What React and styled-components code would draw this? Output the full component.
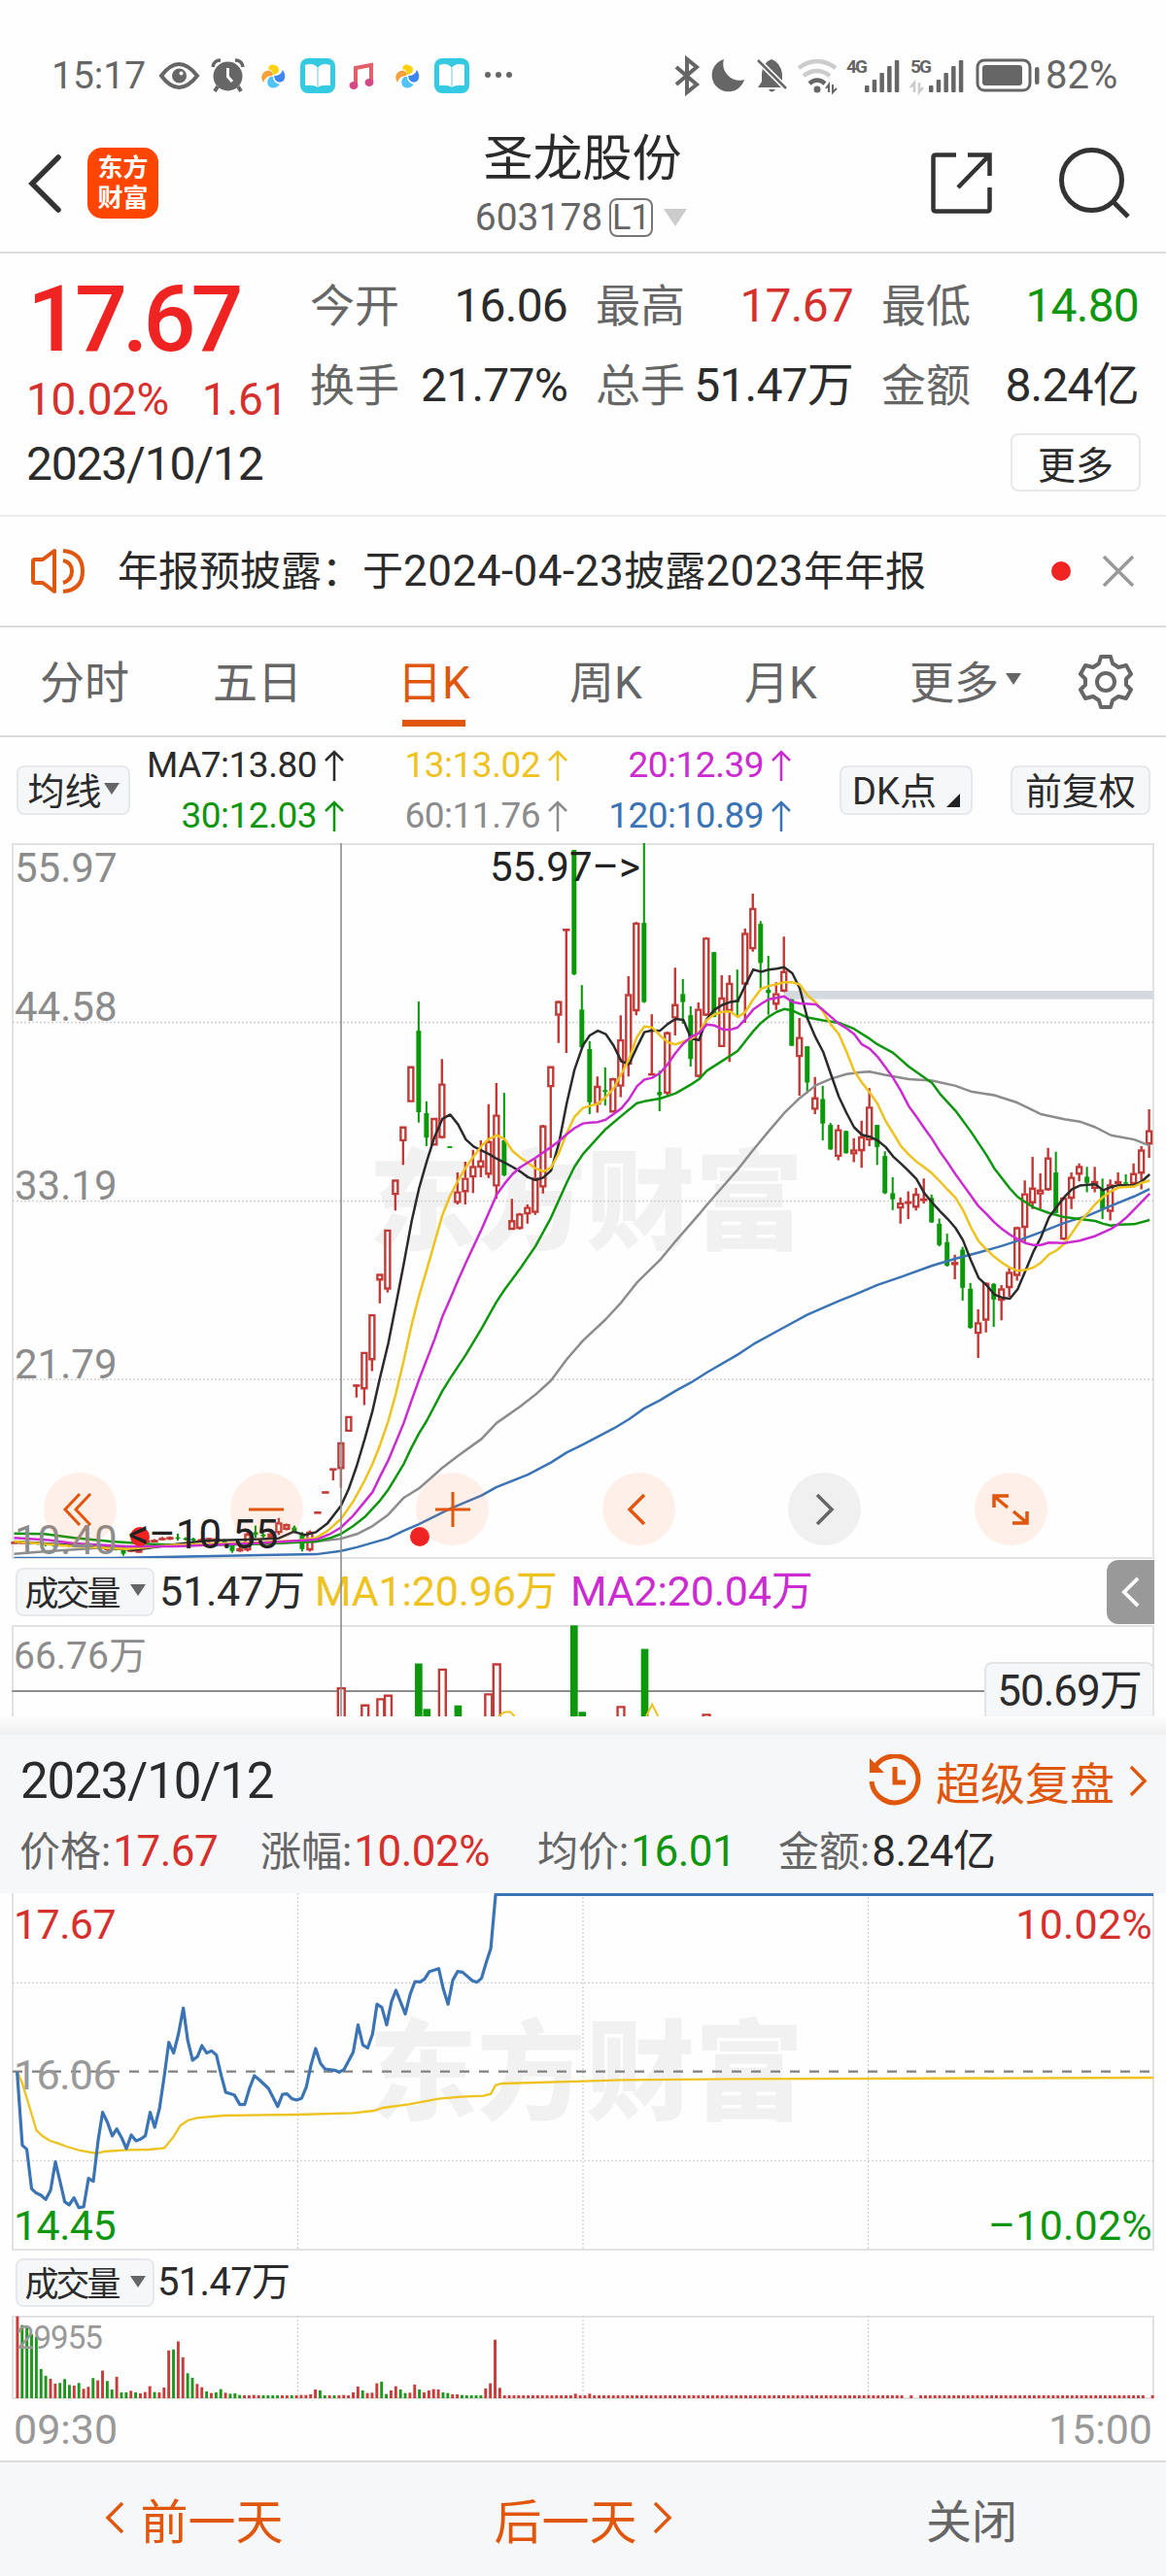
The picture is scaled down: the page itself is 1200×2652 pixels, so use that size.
import { useState } from "react";
import styled, { createGlobalStyle } from "styled-components";

const RED = "#d6302d";
const GREEN = "#0f960f";
const ORANGE = "#e0560b";
const YELLOW = "#eec21f";
const PURPLE = "#cb2bd0";
const BLUE = "#3a74b4";
const GREY = "#8c8c8c";
const DARK = "#2b2b2b";

// the daily chart is plotted on a 3136 x 1519 canvas, one candle every 20.9 units
const STEP = 20.9;
const CURSOR = 917;

// [high, body top, body bottom, low, up?]
const candles = [
  [1501, 1501, 1503, 1503, 1], [1500, 1501, 1503, 1504, 1], [1500, 1503, 1505, 1506, 0], [1501, 1502, 1505, 1507, 0],
  [1503, 1505, 1508, 1510, 0], [1504, 1505, 1509, 1511, 0], [1503, 1506, 1509, 1510, 1], [1504, 1506, 1510, 1512, 0],
  [1506, 1507, 1510, 1511, 1], [1505, 1508, 1511, 1512, 1], [1506, 1510, 1513, 1514, 0], [1507, 1510, 1513, 1515, 0],
  [1506, 1514, 1517, 1522, 1], [1508, 1513, 1517, 1519, 0], [1513, 1517, 1526, 1530, 0], [1510, 1515, 1521, 1522, 1],
  [1512, 1519, 1523, 1524, 1], [1496, 1498, 1502, 1503, 1], [1495, 1497, 1501, 1502, 1], [1490, 1493, 1496, 1497, 1],
  [1489, 1491, 1495, 1497, 1], [1483, 1491, 1494, 1498, 0], [1491, 1493, 1496, 1498, 0], [1492, 1494, 1498, 1502, 0],
  [1493, 1496, 1500, 1502, 1], [1492, 1493, 1500, 1502, 1], [1492, 1494, 1500, 1501, 1], [1495, 1497, 1503, 1508, 0],
  [1504, 1508, 1520, 1524, 0], [1506, 1515, 1520, 1522, 1], [1480, 1484, 1518, 1521, 1], [1466, 1480, 1486, 1492, 0],
  [1482, 1485, 1489, 1492, 0], [1480, 1484, 1492, 1496, 1], [1450, 1460, 1481, 1486, 1], [1462, 1464, 1474, 1476, 1],
  [1466, 1470, 1480, 1482, 0], [1480, 1485, 1516, 1521, 0], [1476, 1480, 1518, 1521, 1], [1438, 1437, 1439, 1438, 1],
  [1395, 1394, 1396, 1395, 1], [1346, 1345, 1347, 1370, 1], [1290, 1290, 1345, 1386, 1], [1234, 1234, 1266, 1266, 1],
  [1168, 1167, 1169, 1194, 1], [1098, 1098, 1176, 1210, 1], [1018, 1018, 1114, 1138, 1], [932, 932, 945, 994, 1],
  [838, 838, 964, 971, 1], [732, 732, 763, 797, 1], [619, 619, 649, 700, 1], [491, 491, 566, 566, 1],
  [353, 415, 588, 610, 0], [565, 590, 642, 660, 0], [601, 601, 658, 658, 1], [475, 528, 642, 644, 1],
  [661, 660, 664, 663, 0], [716, 757, 780, 784, 1], [693, 728, 757, 784, 1], [668, 703, 726, 760, 1],
  [648, 691, 705, 726, 1], [571, 650, 720, 728, 1], [526, 594, 745, 772, 1], [547, 648, 722, 724, 0],
  [772, 818, 837, 837, 1], [802, 804, 835, 837, 1], [784, 790, 804, 825, 1], [688, 728, 801, 806, 1],
  [615, 617, 747, 761, 1], [491, 491, 534, 685, 1], [351, 353, 382, 441, 1], [200, 199, 201, 462, 1],
  [31, 31, 295, 297, 0], [318, 370, 450, 452, 0], [437, 454, 567, 592, 0], [512, 533, 571, 589, 1],
  [493, 541, 545, 574, 0], [515, 517, 588, 588, 1], [382, 434, 533, 556, 1], [299, 338, 486, 512, 1],
  [184, 186, 373, 382, 1], [16, 186, 354, 356, 0], [380, 506, 509, 509, 1], [500, 545, 552, 586, 0],
  [417, 419, 548, 552, 1], [281, 359, 388, 425, 1], [305, 337, 354, 400, 0], [363, 382, 475, 491, 0],
  [355, 369, 512, 514, 1], [216, 218, 382, 384, 1], [248, 248, 386, 386, 0], [297, 345, 449, 449, 1],
  [297, 314, 373, 481, 1], [285, 350, 354, 383, 0], [198, 208, 316, 398, 1], [124, 155, 241, 247, 1],
  [182, 188, 271, 325, 0], [256, 328, 335, 381, 0], [312, 336, 359, 371, 1], [215, 289, 331, 333, 1],
  [348, 348, 447, 447, 0], [388, 429, 470, 553, 1], [448, 448, 525, 548, 0], [513, 557, 582, 592, 1],
  [532, 560, 612, 648, 0], [611, 615, 667, 668, 0], [615, 625, 682, 690, 1], [627, 628, 675, 676, 0],
  [643, 668, 677, 694, 1], [606, 640, 670, 706, 1], [537, 577, 647, 660, 1], [615, 615, 662, 700, 0],
  [671, 681, 760, 762, 0], [726, 760, 773, 796, 0], [769, 781, 792, 825, 1], [756, 778, 782, 815, 1],
  [749, 762, 790, 797, 1], [729, 772, 776, 782, 1], [763, 770, 822, 823, 0], [814, 825, 870, 873, 0],
  [846, 864, 914, 916, 0], [891, 907, 912, 943, 1], [874, 880, 961, 988, 0], [951, 963, 1046, 1048, 0],
  [1007, 1035, 1058, 1110, 1], [950, 951, 1030, 1056, 1], [951, 953, 986, 1044, 0], [955, 963, 988, 1030, 1],
  [918, 928, 961, 980, 1], [831, 833, 935, 946, 1], [733, 761, 833, 865, 1], [683, 749, 781, 794, 1],
  [718, 753, 762, 794, 1], [664, 685, 753, 755, 1], [672, 716, 802, 803, 0], [768, 770, 858, 860, 1],
  [716, 726, 771, 794, 1], [697, 703, 720, 735, 1], [704, 725, 738, 758, 0], [704, 735, 750, 758, 1],
  [729, 752, 794, 815, 0], [731, 742, 799, 818, 1], [716, 735, 740, 742, 1], [720, 737, 740, 742, 0],
  [697, 718, 740, 745, 1], [660, 668, 718, 752, 1], [582, 627, 656, 685, 1],
];

const averages = [
  { color: BLUE, points: "38,1535 300,1535 500,1532 700,1529 850,1527 917,1520 960,1512 1044,1493 1086,1477 1127,1463 1211,1430 1295,1402 1336,1384 1420,1358 1482,1332 1524,1311 1568,1294 1650,1260 1692,1240 1733,1217 1775,1200 1817,1180 1859,1162 1901,1141 1984,1103 2026,1081 2109,1045 2172,1018 2256,989 2297,976 2360,955 2423,938 2507,914 2570,899 2632,886 2695,872 2737,861 2799,843 2863,823 2925,808 2988,787 3050,767 3092,751" },
  { color: GREY, points: "38,1526 120,1521 300,1512 500,1508 700,1504 850,1500 917,1494 960,1484 1002,1467 1044,1443 1086,1407 1127,1387 1169,1358 1190,1343 1232,1318 1295,1282 1336,1248 1399,1213 1440,1188 1482,1158 1524,1113 1568,1073 1629,1028 1671,992 1713,950 1775,902 1817,862 1880,805 1901,785 1984,710 2026,668 2068,628 2109,590 2151,558 2194,531 2235,517 2277,507 2318,503 2339,502 2382,509 2444,518 2507,521 2570,532 2611,544 2674,552 2737,568 2799,592 2863,603 2904,608 2946,620 2988,637 3050,646 3092,659" },
  { color: GREEN, points: "38,1483 120,1484 200,1492 300,1500 400,1505 500,1508 700,1505 850,1500 890,1492 917,1484 950,1467 981,1448 1002,1430 1022,1413 1044,1390 1064,1364 1086,1335 1107,1300 1127,1270 1148,1243 1190,1180 1211,1153 1253,1103 1295,1048 1336,990 1357,965 1399,920 1440,873 1482,812 1524,738 1545,704 1568,677 1608,642 1629,624 1671,596 1713,569 1733,565 1775,559 1817,548 1859,529 1880,518 1901,500 1943,479 1984,458 2005,437 2026,416 2047,398 2068,385 2089,375 2109,369 2131,372 2172,387 2214,393 2256,398 2297,411 2339,432 2360,444 2402,462 2444,491 2507,526 2528,549 2570,585 2611,629 2654,680 2674,707 2716,750 2737,768 2779,790 2821,802 2863,811 2904,815 2946,819 2967,825 2988,829 3009,827 3050,826 3092,817" },
  { color: DARK, points: "38,1500 200,1508 360,1518 470,1506 560,1498 700,1495 750,1493 790,1479 820,1486 850,1480 880,1462 917,1424 938,1388 960,1338 981,1282 1002,1222 1022,1152 1044,1080 1064,1000 1086,910 1107,820 1127,750 1148,692 1169,640 1190,602 1211,593 1232,614 1253,646 1274,661 1295,669 1315,677 1336,687 1357,695 1378,704 1399,714 1420,726 1440,732 1461,727 1482,712 1503,655 1524,570 1545,498 1568,446 1586,425 1608,415 1629,422 1650,446 1671,480 1692,486 1713,450 1733,418 1754,414 1775,415 1797,400 1817,390 1838,392 1859,432 1880,435 1901,390 1922,370 1943,360 1964,354 1984,352 2005,318 2026,285 2047,290 2068,285 2089,283 2109,280 2131,293 2151,325 2172,390 2194,430 2214,460 2235,508 2256,555 2277,590 2297,620 2318,636 2339,640 2360,648 2382,662 2402,682 2423,697 2444,713 2465,730 2486,760 2507,780 2528,798 2549,815 2570,834 2590,860 2611,902 2632,940 2654,956 2674,975 2695,982 2716,984 2737,964 2758,925 2779,885 2799,855 2821,812 2841,790 2863,768 2883,752 2904,744 2925,742 2946,741 2967,754 2988,747 3009,743 3050,743 3071,735 3092,720" },
  { color: YELLOW, points: "38,1500 200,1510 340,1516 470,1507 700,1502 800,1498 850,1492 880,1478 917,1452 950,1415 981,1370 1002,1335 1022,1295 1044,1245 1064,1188 1086,1115 1107,1040 1127,978 1148,922 1169,864 1190,806 1211,765 1232,733 1253,705 1274,682 1295,660 1315,645 1336,637 1357,645 1378,670 1399,684 1420,696 1440,707 1461,714 1482,706 1503,675 1524,633 1545,598 1568,579 1608,570 1629,556 1650,538 1671,507 1692,475 1713,428 1733,406 1754,408 1775,425 1797,440 1817,444 1838,438 1859,432 1880,418 1901,392 1922,380 1943,375 1964,374 1984,386 2005,375 2026,348 2047,326 2068,320 2089,316 2109,312 2131,312 2151,317 2172,340 2194,355 2214,375 2235,402 2256,422 2277,460 2297,500 2318,525 2339,546 2360,570 2382,607 2402,632 2423,660 2444,678 2465,693 2486,705 2507,718 2528,735 2549,753 2570,770 2590,796 2611,832 2632,862 2654,880 2674,895 2695,908 2716,918 2737,925 2758,923 2779,918 2799,908 2821,890 2841,882 2863,867 2883,845 2904,820 2925,803 2946,783 2967,768 2988,756 3009,748 3050,746 3071,738 3092,733" },
  { color: PURPLE, points: "38,1492 130,1497 200,1504 340,1510 470,1510 700,1503 850,1496 890,1483 917,1470 950,1445 981,1415 1002,1395 1022,1362 1044,1328 1064,1290 1086,1248 1107,1200 1127,1156 1169,1070 1190,1022 1211,984 1232,945 1253,908 1295,837 1336,763 1357,740 1378,720 1399,705 1440,685 1482,662 1503,650 1524,635 1545,622 1568,612 1586,610 1608,609 1629,604 1650,592 1671,580 1692,560 1713,533 1733,519 1754,515 1775,505 1797,485 1817,462 1838,442 1859,428 1880,420 1901,402 1922,404 1943,412 1964,413 1984,408 2005,390 2026,370 2047,358 2068,348 2089,345 2109,342 2131,354 2151,357 2194,359 2214,371 2256,400 2277,410 2297,422 2318,444 2339,453 2360,470 2382,493 2402,515 2423,543 2444,575 2465,598 2486,622 2507,645 2528,672 2549,695 2570,720 2590,742 2611,765 2632,788 2654,805 2674,822 2695,836 2716,848 2737,858 2758,866 2779,870 2799,870 2821,865 2863,866 2904,861 2946,851 2988,836 3009,825 3029,812 3050,795 3071,778 3092,761" },
];

const minutePrice =
  "46,608 60,836 72,848 85,970 97,983 110,990 123,1003 136,975 149,887 161,945 174,1010 186,1020 199,998 212,1028 225,1026 238,938 251,947 264,820 276,734 289,765 302,807 314,785 327,812 340,846 353,804 366,822 378,817 391,806 404,734 416,780 429,722 442,620 454,518 467,551 480,492 493,412 505,512 518,573 531,562 543,528 556,551 569,544 582,557 595,620 607,672 630,680 645,710 658,710 671,660 684,621 697,633 722,660 747,716 760,678 772,677 785,692 798,696 811,691 824,655 836,590 849,537 862,583 874,600 900,604 912,610 925,602 950,548 963,464 976,526 989,535 1002,492 1014,400 1027,410 1040,464 1053,392 1065,357 1090,430 1103,370 1116,330 1130,331 1142,322 1155,299 1180,290 1192,352 1205,400 1218,325 1231,299 1244,301 1257,314 1270,327 1283,332 1295,320 1308,270 1320,228 1333,61 3102,61";
const minuteAverage =
  "46,608 60,645 80,720 98,790 115,808 135,822 155,829 180,840 215,852 260,861 280,855 340,850 400,849 442,844 465,812 485,775 505,759 530,751 600,744 800,741 950,736 1005,729 1030,720 1100,709 1180,692 1240,686 1300,683 1320,677 1333,650 1350,645 1568,638 1668,634 1968,631 3102,627";

const dayVolume = [
  [459, 771, 1], [491, 824, 1], [512, 805, 1], [522, 794, 1], [563, 697, 0], [574, 838, 0], [595, 713, 1], [616, 827, 0],
  [657, 790, 1], [668, 697, 1], [772, 579, 0], [783, 847, 0], [835, 829, 1], [867, 652, 0], [950, 853, 1],
];

// bar tops per minute: r = rising, g = falling
const minuteVolume =
  "r225 g252 g254 g280 g288 g387 g408 r417 r432 g430 g418 g436 r438 g430 r448 r442 g415 r422 r392 g424 g450 r411 g459 g459 r454 g459 r462 r458 r440 g458 r459 r444 r330 g327 r302 r351 g400 g414 r433 r443 g456 r461 g459 g449 r460 g463 g462 g467 r468 r468 r467 r468 g468 g468 g468 g468 r468 r468 g468 r468 r467 r467 r465 r450 g453 g468 r468 g468 r468 r467 r468 r459 r441 g453 r461 r460 r431 g426 g464 r453 r440 g450 g461 r460 r435 g450 r459 r453 r449 r450 g459 g461 r465 r465 g467 g468 g468 g468 g468 r447 r431 r297 r445".split(" ");
for (let i = minuteVolume.length; i < 241; i++) {
  if (i === 188 || i === 190 || i === 239) minuteVolume.push("");
  else minuteVolume.push(i === 118 || i === 121 ? "r463" : "r468");
}

const StatusIconsLeft = () => (
  <svg width="376" height="44" viewBox="0 0 376 44">
    <g fill="none" stroke="#666" strokeWidth="4">
      <path d="M3 22 Q21 -2 40 22 Q21 46 3 22Z" />
    </g>
    <circle cx="21.500" cy="22" r="7.500" fill="#666" />
    <circle cx="23.500" cy="19.500" r="2" fill="#fff" />
    <g transform="translate(55 5)">
      <path d="M1 8 Q2 1 9 1 M24 1 Q31 1 32 8" fill="none" stroke="#666" strokeWidth="3.500" />
      <circle cx="16.500" cy="17.500" r="15" fill="#666" />
      <path d="M6 28 L3 33 M27 28 L30 33" stroke="#666" strokeWidth="4" />
      <path d="M16.500 9 V18 L21 23" fill="none" stroke="#fff" strokeWidth="3" />
    </g>
    <Pinwheel x={106} />
    <Book x={146} />
    <path d="M203 32 V14 L219 11 V29" fill="none" stroke="#e0606b" strokeWidth="4" />
    <ellipse cx="201" cy="32" rx="4.500" ry="4" fill="#d44a87" />
    <ellipse cx="217" cy="29" rx="4.500" ry="4" fill="#d44a87" />
    <Pinwheel x={244} />
    <Book x={284} />
    <g fill="#666">
      <circle cx="339" cy="21" r="3" />
      <circle cx="350" cy="21" r="3" />
      <circle cx="361" cy="21" r="3" />
    </g>
  </svg>
);

const Pinwheel = ({ x }) => (
  <g transform={`translate(${x} 10)`}>
    <path d="M7 5 Q8 -1 14 1 Q20 3 17 9 L12 11 Q12 6 7 5Z" fill="#ffd10a" />
    <path d="M22 6 Q26 12 23 17 Q18 21 14 16 L13 12 Q20 12 22 6Z" fill="#3f86f5" />
    <path d="M19 21 Q13 27 8 23 Q4 18 9 13 L12 13 Q12 19 19 21Z" fill="#4fc3fa" />
    <path d="M2 19 Q-2 12 3 8 Q9 4 12 10 L11 12 Q4 12 2 19Z" fill="#f8a13a" />
  </g>
);

const Book = ({ x }) => (
  <g transform={`translate(${x} 4)`}>
    <rect width="36" height="36" rx="8" fill="#34cbe2" />
    <path d="M5 7 Q14 4 18 10 Q22 4 31 7 V28 Q22 27 18 30 Q14 27 5 28Z" fill="#fff" />
    <path d="M18 10 V30" stroke="#9fdcea" strokeWidth="1.500" />
  </g>
);

const StatusIconsRight = () => (
  <svg width="376" height="44" viewBox="0 0 376 44">
    <path d="M2 13 L23 31 L13 39 V5 L23 13 L2 31" fill="none" stroke="#666" strokeWidth="4" />
    <path d="M51 5 A17 17 0 1 0 72 26 A17 17 0 0 1 51 5Z" fill="#666" />
    <g transform="translate(85 4)">
      <path d="M1 30 L5 24 V16 Q6 4 15 1 Q24 4 26 16 V24 L30 30Z M12 32 H19 Q15 37 12 32Z" fill="#666" />
      <path d="M0 1 L31 32" stroke="#fff" strokeWidth="6" />
      <path d="M1 2 L30 31" stroke="#666" strokeWidth="2.500" />
    </g>
    <g fill="none" strokeWidth="4.500">
      <path d="M128 14 Q147 0 166 14" stroke="#ccc" />
      <path d="M133 22 Q147 12 160 22" stroke="#ccc" />
      <path d="M139 30 Q147 23 155 30" stroke="#666" />
    </g>
    <circle cx="147" cy="36" r="3.500" fill="#666" />
    <path d="M159 39 V31 L156 35 M163 31 V39 L167 35" fill="none" stroke="#666" strokeWidth="2" />
    <Signal x={196} />
    <path d="M247 39 V29 L243 34 M252 29 V39 L256 34" fill="none" stroke="#ccc" strokeWidth="2.500" />
    <Signal x={262} />
    <NetText x="177" y="19">4G</NetText>
    <NetText x="243" y="19">5G</NetText>
    <rect x="312" y="6" width="54" height="31" rx="7" fill="none" stroke="#666" strokeWidth="3" />
    <rect x="317" y="11" width="41" height="21" rx="3" fill="#666" />
    <rect x="371" y="13" width="4.500" height="18" rx="2" fill="#666" />
  </svg>
);

const Signal = ({ x }) => (
  <g fill="#666">
    {[7, 13, 20, 27, 33].map((h, i) => (
      <rect key={h} x={x + i * 7.7} y={39 - h} width="4.500" height={h} rx="1" />
    ))}
  </g>
);

const Chevron = ({ left, w = 20, h = 34, color = ORANGE, stroke = 3.5 }) => (
  <svg width={w} height={h} viewBox="0 0 20 34" preserveAspectRatio="none">
    <path
      d={left ? "M18 2 L3 17 L18 32" : "M2 2 L17 17 L2 32"}
      fill="none"
      stroke={color}
      strokeWidth={stroke}
    />
  </svg>
);

const UpArrow = () => (
  <svg width="20" height="32" viewBox="0 0 20 32">
    <path d="M10 32 V2 M1 11 L10 2 L19 11" fill="none" stroke="currentColor" strokeWidth="2.500" />
  </svg>
);

const CandleChart = () => (
  <Plot viewBox="0 16.5 3136 1518.5" preserveAspectRatio="none" $height={736}>
    <g stroke="#d2d2d2" strokeWidth="1.500" strokeDasharray="2 2">
      <path vectorEffect="non-scaling-stroke" d="M34 397 H3102 M34 777 H3102 M34 1156 H3102" />
    </g>
    <rect x="2109" y="330" width="993" height="18" fill="#d4d8df" />
    {candles.map(([high, top, bottom, low, up], i) => {
      const x = CURSOR + (i - 42) * STEP;
      const color = up ? "#c23a37" : "#0b990b";
      return up ? (
        <g key={i} stroke={color} fill="none" strokeWidth="2.400">
          <path vectorEffect="non-scaling-stroke" d={`M${x} ${high} V${top} M${x} ${bottom} V${low}`} />
          <rect vectorEffect="non-scaling-stroke" x={x - 6.5} y={top + 1.5} width="13" height={Math.max(bottom - top - 3, 0.5)} />
        </g>
      ) : (
        <g key={i} fill={color}>
          <rect x={x - 2.7} y={high} width="5.400" height={low - high} />
          <rect x={x - 6.5} y={top} width="13" height={bottom - top} />
        </g>
      );
    })}
    {averages.map(({ color, points }) => (
      <polyline
        key={color}
        points={points}
        fill="none"
        stroke={color}
        strokeWidth="2.500"
        strokeLinejoin="round"
        vectorEffect="non-scaling-stroke"
      />
    ))}
  </Plot>
);

const DayVolumeChart = () => (
  <Plot viewBox="0 578 1568 283" preserveAspectRatio="none" $height={94}>
    <path d="M16 783 H1324" stroke="#8c8c8c" strokeWidth="2" vectorEffect="non-scaling-stroke" />
    {dayVolume.map(([x, top, up]) =>
      up ? (
        <rect
          key={x}
          x={x - 4.5}
          y={top + 3}
          width="9"
          height="200"
          fill="#fff"
          stroke="#c23a37"
          strokeWidth="2.400"
          vectorEffect="non-scaling-stroke"
        />
      ) : (
        <rect key={x} x={x - 5} y={top} width="10" height="300" fill="#0b990b" />
      )
    )}
    <g fill="none" stroke={YELLOW} strokeWidth="2">
      <path vectorEffect="non-scaling-stroke" d="M670 861 L678 848 L686 847 L692 861 M869 861 L877 824 L885 861" />
    </g>
  </Plot>
);

const MinuteChart = () => (
  <Plot viewBox="0 57 3136 1101" preserveAspectRatio="none" $height={367}>
    <g stroke="#cfcfcf" strokeWidth="1.200" strokeDasharray="2 2">
      <path vectorEffect="non-scaling-stroke" d="M34 334 H3102 M34 883 H3102 M801 57 V1158 M1568 57 V1158 M2335 57 V1158" />
    </g>
    <path
      d="M34 608 H3102"
      stroke="#808080"
      strokeWidth="2.200"
      strokeDasharray="10 10"
      vectorEffect="non-scaling-stroke"
    />
    <polyline points={minuteAverage} fill="none" stroke={YELLOW} strokeWidth="2.300" vectorEffect="non-scaling-stroke" />
    <polyline points={minutePrice} fill="none" stroke={BLUE} strokeWidth="3.200" strokeLinejoin="round" vectorEffect="non-scaling-stroke" />
  </Plot>
);

const MinuteVolumeChart = () => (
  <Plot viewBox="0 223 1568 254" preserveAspectRatio="none" $height={85}>
    <g stroke="#cfcfcf" strokeWidth="1.200" strokeDasharray="2 2">
      <path vectorEffect="non-scaling-stroke" d="M400.500 223 V477 M784 223 V477 M1167.500 223 V477" />
    </g>
    {minuteVolume.map((bar, i) => {
      if (!bar) return null;
      const top = Number(bar.slice(1));
      return (
        <rect
          key={i}
          x={21.5 + i * 6.36}
          y={top}
          width="3.800"
          height={477 - top}
          fill={bar[0] === "r" ? "#c93c3a" : "#1d981d"}
        />
      );
    })}
  </Plot>
);

const quotes = [
  ["今开", "16.06", DARK],
  ["最高", "17.67", RED],
  ["最低", "14.80", GREEN],
  ["换手", "21.77%", DARK],
  ["总手", "51.47万", DARK],
  ["金额", "8.24亿", DARK],
];

const maValues = [
  ["MA7:13.80", DARK],
  ["13:13.02", YELLOW],
  ["20:12.39", PURPLE],
  ["30:12.03", GREEN],
  ["60:11.76", GREY],
  ["120:10.89", BLUE],
];

const tabs = ["分时", "五日", "日K", "周K", "月K", "更多"];

const dayStats = [
  ["价格", "17.67", RED, 248],
  ["涨幅", "10.02%", RED, 285],
  ["均价", "16.01", GREEN, 248],
  ["金额", "8.24亿", DARK, 230],
];

function App() {
  const [tab, setTab] = useState("日K");

  return (
    <Page>
      <GlobalStyle />
      <StatusBar>
        <Clock>15:17</Clock>
        <StatusIconsLeft />
        <StatusRight>
          <StatusIconsRight />
          82%
        </StatusRight>
      </StatusBar>

      <Header>
        <svg width="36" height="62" viewBox="0 0 36 62">
          <path d="M33 4 L6 31 L33 58" fill="none" stroke="#333" strokeWidth="5.500" strokeLinecap="round" />
        </svg>
        <Logo>
          <span>东方</span>
          <span>财富</span>
        </Logo>
        <TitleBox>
          <StockName>圣龙股份</StockName>
          <CodeRow>
            603178 <Level>L1</Level>
            <Triangle $size={12} $color="#ccc" />
          </CodeRow>
        </TitleBox>
        <svg width="64" height="64" viewBox="0 0 64 64">
          <path
            d="M26 2.500 H5 Q2.500 2.500 2.500 5 V58 Q2.500 60.500 5 60.500 H58 Q60.500 60.500 60.500 58 V36 M38 2.500 H60.500 V24 M60 3 L28 36"
            fill="none"
            stroke="#333"
            strokeWidth="4.500"
          />
        </svg>
        <svg width="74" height="74" viewBox="0 0 74 74">
          <circle cx="33.500" cy="33.500" r="31" fill="none" stroke="#333" strokeWidth="5" />
          <path d="M56 56 L71 71" stroke="#333" strokeWidth="5" />
        </svg>
      </Header>

      <Quote>
        <QuoteTop>
          <PriceBox>
            <Price>17.67</Price>
            <Change>
              <span>10.02%</span>
              <span>1.61</span>
            </Change>
          </PriceBox>
          <QuoteGrid>
            {quotes.map(([label, value, color]) => (
              <QuoteItem key={label}>
                <QuoteLabel>{label}</QuoteLabel>
                <QuoteValue $color={color}>{value}</QuoteValue>
              </QuoteItem>
            ))}
          </QuoteGrid>
        </QuoteTop>
        <QuoteBottom>
          <DateText>2023/10/12</DateText>
          <MoreButton>更多</MoreButton>
        </QuoteBottom>
      </Quote>

      <News>
        <svg width="56" height="50" viewBox="0 0 56 50">
          <g fill="none" stroke={ORANGE} strokeWidth="4">
            <path d="M24 4 V46 L12 37 H4 Q2 37 2 35 V15 Q2 13 4 13 H12Z" strokeLinejoin="round" />
            <path d="M33 14 Q42 16 42 25 Q42 34 33 37 M33 4 Q53 6 53 25 Q53 44 33 46" />
          </g>
        </svg>
        <NewsText>
          年报预披露：于<NewsNum>2024-04-23</NewsNum>披露<NewsNum>2023</NewsNum>年年报
        </NewsText>
        <Dot />
        <svg width="34" height="34" viewBox="0 0 34 34">
          <path d="M2 2 L32 32 M32 2 L2 32" stroke="#999" strokeWidth="3.500" />
        </svg>
      </News>

      <Tabs>
        {tabs.map((name) => (
          <Tab key={name} $active={tab === name} onClick={() => setTab(name)}>
            {name}
            {name === "更多" && <Triangle $size={8} $color="#666" />}
          </Tab>
        ))}
        <svg width="56" height="58" viewBox="0 0 56 58">
          <g fill="none" stroke="#666" strokeWidth="4">
            <path
              d="M23 3 H33 L35 10 L41 14 L49 12 L54 21 L49 26 V32 L54 37 L49 46 L41 44 L35 48 L33 55 H23 L21 48 L15 44 L7 46 L2 37 L7 32 V26 L2 21 L7 12 L15 14 L21 10Z"
              strokeLinejoin="round"
            />
            <circle cx="28" cy="29" r="9" />
          </g>
        </svg>
      </Tabs>

      <MaBar>
        <SmallButton $width={117}>
          均线
          <Triangle $size={8} $color="#666" />
        </SmallButton>
        <MaGrid>
          {maValues.map(([text, color]) => (
            <MaItem key={text} $color={color}>
              {text}
              <UpArrow />
            </MaItem>
          ))}
        </MaGrid>
        <SmallButton $width={137} $gap={10}>
          DK点
          <Corner />
        </SmallButton>
        <SmallButton $width={144}>前复权</SmallButton>
      </MaBar>

      <DayArea>
        <ChartFrame $height={736}>
          <Watermark $top={316}>东方财富</Watermark>
          <CandleChart />
          <AxisLabel $top={2}>55.97</AxisLabel>
          <AxisLabel $top={145}>44.58</AxisLabel>
          <AxisLabel $top={329}>33.19</AxisLabel>
          <AxisLabel $top={513}>21.79</AxisLabel>
          <AxisLabel $top={694}>10.40</AxisLabel>
          <EventDot $left={134} />
          <EventDot $left={422} />
          <ChartControls>
            <RoundButton $shift={6}>
              <svg width="32" height="34" viewBox="0 0 32 34">
                <path d="M18 1 L3 17 L18 33 M29 1 L14 17 L29 33" fill="none" stroke={ORANGE} strokeWidth="3" />
              </svg>
            </RoundButton>
            <RoundButton>
              <svg width="36" height="36" viewBox="0 0 36 36">
                <path d="M0 18 H36" stroke={ORANGE} strokeWidth="3" />
              </svg>
            </RoundButton>
            <RoundButton>
              <svg width="36" height="36" viewBox="0 0 36 36">
                <path d="M0 18 H36 M18 0 V36" stroke={ORANGE} strokeWidth="3" />
              </svg>
            </RoundButton>
            <RoundButton $shift={4}>
              <Chevron left />
            </RoundButton>
            <RoundButton $grey>
              <Chevron color="#666" />
            </RoundButton>
            <RoundButton>
              <svg width="38" height="38" viewBox="0 0 38 38">
                <path
                  d="M2 17 V5 H17 M3 6 L16 17 M36 21 V33 H21 M35 32 L22 21"
                  fill="none"
                  stroke={ORANGE}
                  strokeWidth="3.500"
                />
              </svg>
            </RoundButton>
          </ChartControls>
          <PeakLabel $left={504} $top={1}>55.97–&gt;</PeakLabel>
          <PeakLabel $left={132} $top={688}>&lt;–10.55</PeakLabel>
        </ChartFrame>

        <VolumeHead $height={69}>
          <VolumeButton>
            成交量
            <Triangle $size={8} $color="#666" />
          </VolumeButton>
          <VolumeValue $width={160} $color={DARK}>51.47万</VolumeValue>
          <VolumeValue $width={263} $color={YELLOW}>MA1:20.96万</VolumeValue>
          <VolumeValue $width={250} $color={PURPLE}>MA2:20.04万</VolumeValue>
          <SideTab>
            <Chevron left w={19} h={32} color="#fff" stroke={4} />
          </SideTab>
        </VolumeHead>

        <ChartFrame $height={94} $open>
          <DayVolumeChart />
          <VolumeMax>66.76万</VolumeMax>
          <CursorValue>50.69万</CursorValue>
        </ChartFrame>
        <CursorLine />
      </DayArea>

      <Shade />

      <DayPanel>
        <PanelRow>
          <PanelDate>2023/10/12</PanelDate>
          <Replay>
            <svg width="54" height="54" viewBox="0 0 54 54">
              <g fill="none" stroke={ORANGE} strokeWidth="5">
                <path d="M6 14 A24 24 0 1 1 3 28" />
                <path d="M27 13 V29 H38" />
              </g>
              <path d="M1 4 V19 H16Z" fill={ORANGE} />
            </svg>
            超级复盘
            <Chevron w={19} h={33} />
          </Replay>
        </PanelRow>
        <PanelStats>
          {dayStats.map(([label, value, color, width]) => (
            <PanelStat key={label} $width={width}>
              {label}:<PanelValue $color={color}>{value}</PanelValue>
            </PanelStat>
          ))}
        </PanelStats>
      </DayPanel>

      <ChartFrame $height={367} $noTop>
        <Watermark $top={131}>东方财富</Watermark>
        <MinuteChart />
        <MinuteLabel $top={8} $color={RED}>17.67</MinuteLabel>
        <MinuteLabel $top={163} $color="#999">16.06</MinuteLabel>
        <MinuteLabel $top={318} $color={GREEN}>14.45</MinuteLabel>
        <MinuteLabel $top={8} $color={RED} $right>10.02%</MinuteLabel>
        <MinuteLabel $top={318} $color={GREEN} $right>–10.02%</MinuteLabel>
      </ChartFrame>

      <VolumeHead $height={68}>
        <VolumeButton>
          成交量
          <Triangle $size={8} $color="#666" />
        </VolumeButton>
        <VolumeValue $small $width={160} $color={DARK}>51.47万</VolumeValue>
      </VolumeHead>

      <ChartFrame $height={85}>
        <MinuteVolumeChart />
        <MinuteVolumeMax>29955</MinuteVolumeMax>
      </ChartFrame>

      <TimeRow>
        <span>09:30</span>
        <span>15:00</span>
      </TimeRow>

      <Footer>
        <FooterButton>
          <Chevron left />
          前一天
        </FooterButton>
        <FooterButton>
          后一天
          <Chevron />
        </FooterButton>
        <FooterButton $grey>关闭</FooterButton>
      </Footer>
    </Page>
  );
}

export default App;

const GlobalStyle = createGlobalStyle`
  * {
    box-sizing: border-box;
  }
  body {
    margin: 0;
    background: #fefefe;
    font-family: Roboto, "Noto Sans CJK SC", sans-serif;
    color: ${DARK};
  }
  button {
    font-family: inherit;
    color: inherit;
    margin: 0;
    padding: 0;
    border: none;
    background: none;
  }
  svg {
    display: block;
    flex: none;
  }
`;

const Page = styled.div`
  width: 1200px;
  height: 2652px;
  display: flex;
  flex-direction: column;
  overflow: hidden;
  line-height: 1;
  white-space: nowrap;
`;

const StatusBar = styled.div`
  height: 118px;
  padding: 38px 0 0 53px;
  display: flex;
  align-items: center;
  color: #666;
`;

const Clock = styled.span`
  width: 110px;
  font-size: 39px;
`;

const StatusRight = styled.div`
  width: 506px;
  margin-left: auto;
  display: flex;
  align-items: center;
  gap: 6px;
  font-size: 40px;
`;

const NetText = styled.text`
  font-size: 19px;
  font-weight: 700;
  fill: #666;
  letter-spacing: -2px;
`;

const Header = styled.header`
  height: 143px;
  padding: 0 36px 0 27px;
  border-bottom: 2px solid #dcdcdc;
  display: flex;
  align-items: center;
`;

const Logo = styled.div`
  width: 73px;
  height: 73px;
  margin-left: 27px;
  border-radius: 15px;
  background: #ff4600;
  color: #fff;
  font-size: 26px;
  font-weight: 700;
  display: flex;
  flex-direction: column;
  align-items: center;
  justify-content: center;
  gap: 5px;
`;

const TitleBox = styled.div`
  flex: 1;
  padding-top: 5px;
  display: flex;
  flex-direction: column;
  align-items: center;
  gap: 15px;

  & + svg {
    margin-right: 68px;
  }
`;

const StockName = styled.div`
  margin-left: 78px;
  font-size: 51px;
`;

const CodeRow = styled.div`
  margin-left: 75px;
  display: flex;
  align-items: center;
  gap: 7px;
  font-size: 39px;
  color: #666;
`;

const Level = styled.span`
  width: 45px;
  height: 40px;
  margin-right: 4px;
  border: 2px solid #777;
  border-radius: 8px;
  text-align: center;
  line-height: 37px;
  font-size: 36px;
`;

const Triangle = styled.i`
  border-left: ${(p) => p.$size}px solid transparent;
  border-right: ${(p) => p.$size}px solid transparent;
  border-top: ${(p) => p.$size * 1.5}px solid ${(p) => p.$color};
`;

const Quote = styled.section`
  height: 271px;
  border-bottom: 2px solid #ececec;
`;

const QuoteTop = styled.div`
  height: 180px;
  display: flex;
  padding-left: 29px;
`;

const PriceBox = styled.div`
  width: 290px;
  padding-top: 20px;
`;

const Price = styled.div`
  margin-left: -1px;
  font-size: 95px;
  font-weight: 500;
  letter-spacing: -5px;
  color: #f02323;
`;

const Change = styled.div`
  margin: 12px 0 0 -2px;
  display: flex;
  gap: 34px;
  font-size: 46px;
  letter-spacing: -0.4px;
  color: ${RED};
`;

const QuoteGrid = styled.div`
  padding-top: 13px;
  display: grid;
  grid-template-columns: repeat(3, 265px);
  grid-auto-rows: 82px;
  column-gap: 29px;
`;

const QuoteItem = styled.div`
  display: flex;
  align-items: center;
  justify-content: space-between;
`;

const QuoteLabel = styled.span`
  font-size: 46px;
  color: #666;
`;

const QuoteValue = styled.span`
  font-size: 48px;
  letter-spacing: -0.8px;
  color: ${(p) => p.$color};
`;

const QuoteBottom = styled.div`
  height: 70px;
  padding: 0 26px 0 27px;
  display: flex;
  align-items: center;
  justify-content: space-between;
`;

const DateText = styled.span`
  padding-top: 3px;
  font-size: 48px;
  letter-spacing: -1.2px;
`;

const MoreButton = styled.button`
  width: 134px;
  height: 60px;
  padding-bottom: 5px;
  border: 2px solid #e8e8e8;
  border-radius: 8px;
  font-size: 39px;
`;

const News = styled.section`
  height: 114px;
  padding: 0 32px;
  border-bottom: 2px solid #dcdcdc;
  display: flex;
  align-items: center;
`;

const NewsText = styled.span`
  flex: 1;
  margin-left: 33px;
  font-size: 42px;
`;

const NewsNum = styled.span`
  font-size: 44px;
  letter-spacing: 0.5px;
`;

const Dot = styled.i`
  width: 20px;
  height: 20px;
  margin-right: 32px;
  border-radius: 50%;
  background: #f02323;
`;

const Tabs = styled.nav`
  height: 113px;
  padding-left: 41px;
  border-bottom: 2px solid #dcdcdc;
  display: grid;
  grid-template-columns: 178px 190px 177px 180px 170px 174px 56px;
  align-items: center;
`;

const Tab = styled.button`
  height: 100%;
  border-top: 4px solid transparent;
  border-bottom: 9px solid transparent;
  display: flex;
  align-items: center;
  gap: 7px;
  font-size: 46px;
  color: ${(p) => (p.$active ? ORANGE : "#666")};
  ${(p) =>
    p.$active &&
    `
    background: linear-gradient(${ORANGE}, ${ORANGE}) 5px 100% / 65px 7px no-repeat;
  `}
`;

const MaBar = styled.div`
  height: 109px;
  padding: 0 15px 0 17px;
  display: flex;
  align-items: center;
`;

const SmallButton = styled.button`
  flex: none;
  width: ${(p) => p.$width}px;
  height: 51px;
  padding-bottom: 4px;
  border: 2px solid #e6e8ec;
  border-radius: 8px;
  background: #f6f7f9;
  display: flex;
  align-items: center;
  justify-content: center;
  gap: ${(p) => p.$gap || 2}px;
  font-size: 38px;

  & + & {
    margin-left: 39px;
  }
`;

const Corner = styled.i`
  align-self: flex-end;
  margin-bottom: 2px;
  border-left: 14px solid transparent;
  border-bottom: 14px solid #222;
`;

const MaGrid = styled.div`
  flex: none;
  width: 680px;
  margin-right: 50px;
  display: grid;
  grid-template-columns: 220px 230px 230px;
  grid-auto-rows: 52px;
`;

const MaItem = styled.div`
  display: flex;
  align-items: center;
  justify-content: flex-end;
  gap: 8px;
  font-size: 37px;
  letter-spacing: -0.5px;
  color: ${(p) => p.$color};
`;

const DayArea = styled.div`
  position: relative;
`;

const ChartFrame = styled.div`
  position: relative;
  height: ${(p) => p.$height}px;

  &::after {
    content: "";
    position: absolute;
    inset: 0 12px ${(p) => (p.$open ? 0 : -1)}px 12px;
    border: 2px solid #e2e2e2;
    ${(p) => p.$open && "border-bottom: none;"}
    ${(p) => p.$noTop && "border-top: none;"}
    pointer-events: none;
    z-index: -1;
  }
`;

const Plot = styled.svg`
  position: relative;
  width: 1200px;
  height: ${(p) => p.$height}px;
`;

const Watermark = styled.div`
  position: absolute;
  left: 379px;
  top: ${(p) => p.$top}px;
  font-size: 112px;
  font-weight: 900;
  color: #f1f1f1;
`;

const AxisLabel = styled.span`
  position: absolute;
  left: 15px;
  top: ${(p) => p.$top}px;
  line-height: 48px;
  font-size: 42px;
  color: ${GREY};
`;

const PeakLabel = styled(AxisLabel)`
  left: ${(p) => p.$left}px;
  color: #222;
`;

const EventDot = styled.i`
  position: absolute;
  left: ${(p) => p.$left}px;
  top: 704px;
  width: 20px;
  height: 20px;
  border-radius: 50%;
  background: #f02323;
`;

const ChartControls = styled.div`
  position: absolute;
  left: 45px;
  top: 648px;
  display: flex;
  gap: 116.5px;
`;

const RoundButton = styled.button`
  width: 75px;
  height: 75px;
  border-radius: 50%;
  background: ${(p) => (p.$grey ? "rgba(120, 120, 120, 0.1)" : "rgba(255, 120, 50, 0.1)")};
  display: flex;
  align-items: center;
  justify-content: center;
  padding-right: ${(p) => p.$shift || 0}px;
`;

const VolumeHead = styled.div`
  height: ${(p) => p.$height}px;
  padding: 0 12px 0 16px;
  display: flex;
  align-items: center;
`;

const VolumeButton = styled.button`
  width: 143px;
  height: 50px;
  padding-bottom: 3px;
  border: 2px solid #e6e8ec;
  border-radius: 8px;
  background: #f6f7f9;
  display: flex;
  align-items: center;
  justify-content: center;
  gap: 12px;
  font-size: 35px;
  letter-spacing: -3px;
`;

const VolumeValue = styled.span`
  width: ${(p) => p.$width}px;
  margin-left: ${(p) => (p.$small ? 3 : 5)}px;
  font-size: ${(p) => (p.$small ? 40 : 43)}px;
  letter-spacing: ${(p) => (p.$small ? -0.7 : -0.2)}px;
  color: ${(p) => p.$color};

  & + & {
    margin-left: 0;
  }
`;

const SideTab = styled.button`
  width: 49px;
  height: 66px;
  margin-left: auto;
  border-radius: 12px 0 0 12px;
  background: #999;
  display: flex;
  align-items: center;
  justify-content: center;
`;

const VolumeMax = styled.span`
  position: absolute;
  left: 14px;
  top: 13px;
  font-size: 39px;
  color: ${GREY};
`;

const CursorValue = styled.div`
  position: absolute;
  right: 12px;
  top: 38px;
  width: 175px;
  height: 56px;
  border: 2px solid #e2e4e8;
  border-bottom: none;
  border-radius: 8px 8px 0 0;
  background: #f6f7f9;
  text-align: center;
  line-height: 56px;
  font-size: 44px;
  letter-spacing: -1px;
`;

const CursorLine = styled.i`
  position: absolute;
  left: 350px;
  top: 0;
  bottom: 0;
  width: 2px;
  background: #8c8c8c;
  opacity: 0.8;
`;

const Shade = styled.div`
  height: 19px;
  background: linear-gradient(#fdfdfd, #f0f0f0);
`;

const DayPanel = styled.section`
  height: 163px;
  background: #f6f7f9;
`;

const PanelRow = styled.div`
  height: 94px;
  padding: 0 19px 0 21px;
  display: flex;
  align-items: center;
  justify-content: space-between;
`;

const PanelDate = styled.span`
  font-size: 51px;
  letter-spacing: -1.1px;
`;

const Replay = styled.button`
  display: flex;
  align-items: center;
  gap: 15px;
  font-size: 46px;
  color: ${ORANGE};
`;

const PanelStats = styled.div`
  height: 52px;
  padding-left: 20px;
  display: flex;
  align-items: center;
`;

const PanelStat = styled.div`
  width: ${(p) => p.$width}px;
  font-size: 42px;
  color: #666;
`;

const PanelValue = styled.span`
  margin-left: 2px;
  font-size: 44px;
  letter-spacing: -0.5px;
  color: ${(p) => p.$color};
`;

const MinuteLabel = styled.span`
  position: absolute;
  ${(p) => (p.$right ? "right: 14px;" : "left: 14px;")}
  top: ${(p) => p.$top}px;
  line-height: 48px;
  font-size: 43px;
  letter-spacing: ${(p) => (p.$right ? 0.2 : -0.6)}px;
  color: ${(p) => p.$color};
`;

const MinuteVolumeMax = styled.span`
  position: absolute;
  left: 17px;
  top: 6px;
  font-size: 33px;
  letter-spacing: -1px;
  color: #999;
`;

const TimeRow = styled.div`
  height: 64px;
  padding: 0 14px;
  display: flex;
  align-items: center;
  justify-content: space-between;
  font-size: 43px;
  color: #999;
`;

const Footer = styled.footer`
  height: 119px;
  border-top: 2px solid #dcdcdc;
  background: #f6f7f9;
  display: grid;
  grid-template-columns: repeat(3, 1fr);
`;

const FooterButton = styled.button`
  display: flex;
  align-items: center;
  justify-content: center;
  gap: 16px;
  padding-bottom: 3px;
  font-size: ${(p) => (p.$grey ? 47 : 49)}px;
  color: ${(p) => (p.$grey ? "#666" : ORANGE)};
`;
